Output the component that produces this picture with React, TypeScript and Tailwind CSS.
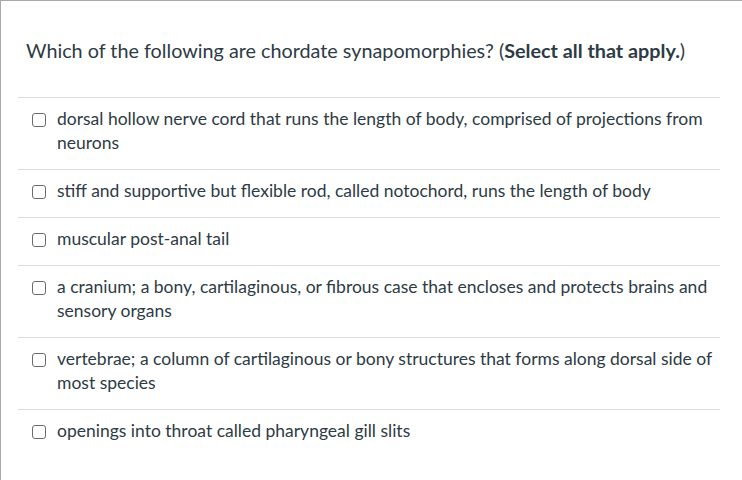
const answers = [
  "dorsal hollow nerve cord that runs the length of body, comprised of projections from neurons",
  "stiff and supportive but flexible rod, called notochord, runs the length of body",
  "muscular post-anal tail",
  "a cranium; a bony, cartilaginous, or fibrous case that encloses and protects brains and sensory organs",
  "vertebrae; a column of cartilaginous or bony structures that forms along dorsal side of most species",
  "openings into throat called pharyngeal gill slits",
];

export default function App() {
  return (
    <div
      className="w-[742px] h-[480px] bg-white border-t border-l border-[#a8a8a8] text-[#2d3b45] overflow-hidden"
      style={{ fontFamily: "Lato, 'Liberation Sans', sans-serif" }}
    >
      <div className="pl-[25px] pt-[35px] pb-[33px] text-[19.8px] leading-[28px]">
        Which of the following are chordate synapomorphies? (<strong className="font-bold">Select all that apply.</strong>)
      </div>
      <div className="ml-[17px] w-[702px]">
        {answers.map((a, i) => (
          <label key={i} className="flex items-start gap-[11px] border-t border-[#dcdcdc] pl-[14px] pr-2 pt-[9px] pb-[14px] text-[17.5px] leading-[24px]">
            <span className="mt-[6px] w-[14px] h-[14px] shrink-0 rounded-[3px] border border-[#6b6b6b] bg-white"></span>
            <span>{a}</span>
          </label>
        ))}
      </div>
    </div>
  );
}
